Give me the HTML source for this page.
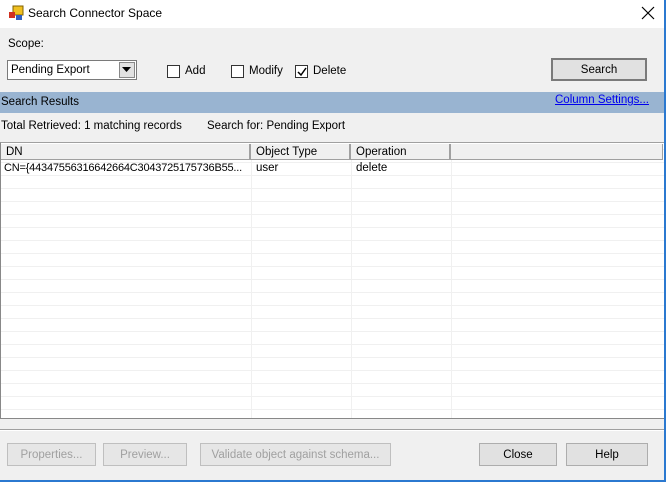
<!DOCTYPE html>
<html><head><style>
*{margin:0;padding:0;box-sizing:border-box}
body{width:666px;height:482px;background:#f0f0f0;font-family:"Liberation Sans",sans-serif;font-size:11.5px;color:#000;position:relative;overflow:hidden}
.a{position:absolute;white-space:nowrap}
.btn{position:absolute;border:1px solid #adadad;background:#e1e1e1;text-align:center;line-height:23px;height:23px}
.dis{color:#a0a0a0;border-color:#bfbfbf;background:#e6e6e6}
.cb{position:absolute;width:13px;height:13px;border:1px solid #333;background:#fff}
.hd{position:absolute;top:144px;height:16px;border-right:2px solid #a0a0a0;border-bottom:1px solid #a0a0a0;background:#f0f0f0;padding-left:5px;line-height:17px}
</style></head><body>
<div class="a" style="left:0;top:0;width:666px;height:28px;background:#fff"></div>
<svg class="a" style="left:8px;top:5px" width="16" height="16"><rect x="5" y="1" width="10" height="9" fill="#f0c020" stroke="#806000"/><rect x="1" y="7" width="6" height="6" fill="#d03020"/><rect x="8" y="10" width="6" height="5" fill="#3060c0"/></svg>
<div class="a" style="left:28px;top:6px;font-size:12px">Search Connector Space</div>
<svg class="a" style="left:641px;top:6px" width="14" height="14"><path d="M1 1L13 13M13 1L1 13" stroke="#000" stroke-width="1.2"/></svg>
<div class="a" style="left:664px;top:0;width:2px;height:482px;background:#2b79d0"></div>
<div class="a" style="left:0;top:480px;width:666px;height:2px;background:#2b79d0"></div>
<div class="a" style="left:8px;top:38px">Scope:</div>
<div class="a" style="left:7px;top:60px;width:130px;height:20px;border:1px solid #7a7a7a;background:#fff;padding-left:3px;line-height:19px">Pending Export</div>
<div class="a" style="left:119px;top:62px;width:16px;height:16px;background:#e1e1e1;border:1px solid #888"></div>
<svg class="a" style="left:122px;top:67px" width="10" height="6"><path d="M0 0H9L4.5 5Z" fill="#000"/></svg>
<div class="cb" style="left:167px;top:65px"></div><div class="a" style="left:185px;top:65px">Add</div>
<div class="cb" style="left:231px;top:65px"></div><div class="a" style="left:249px;top:65px">Modify</div>
<div class="cb" style="left:295px;top:65px"></div>
<svg class="a" style="left:297px;top:67px" width="10" height="10"><path d="M1 5L4 8L9 1" stroke="#000" stroke-width="1.5" fill="none"/></svg>
<div class="a" style="left:313px;top:65px">Delete</div>
<div class="btn" style="left:551px;top:58px;width:96px;border:2px solid #7a7a7a;line-height:20px">Search</div>
<div class="a" style="left:0;top:92px;width:664px;height:21px;background:#99b4d1"></div>
<div class="a" style="left:1px;top:96px">Search Results</div>
<div class="a" style="left:555px;top:94px;color:#0000ee;text-decoration:underline">Column Settings...</div>
<div class="a" style="left:1px;top:120px">Total Retrieved: 1 matching records</div>
<div class="a" style="left:207px;top:120px">Search for: Pending Export</div>
<div class="a" style="left:0;top:142px;width:664px;height:277px;background:#fff;border-top:1px solid #a0a0a0;border-left:1px solid #888;border-bottom:1px solid #888;
background-image:linear-gradient(#f0f0f0 1px,transparent 1px);background-size:100% 13px;background-position:0 32px"></div>
<div class="a" style="left:251px;top:160px;width:1px;height:258px;background:#f0f0f0"></div>
<div class="a" style="left:351px;top:160px;width:1px;height:258px;background:#f0f0f0"></div>
<div class="a" style="left:451px;top:160px;width:1px;height:258px;background:#f0f0f0"></div>
<div class="hd" style="left:1px;width:250px">DN</div>
<div class="hd" style="left:251px;width:100px">Object Type</div>
<div class="hd" style="left:351px;width:100px">Operation</div>
<div class="hd" style="left:451px;width:212px;border-right:1px solid #a0a0a0"></div>
<div class="a" style="left:4px;top:162px;width:244px;overflow:hidden;font-size:11px;letter-spacing:-0.2px">CN={44347556316642664C3043725175736B55...</div>
<div class="a" style="left:256px;top:162px">user</div>
<div class="a" style="left:356px;top:162px">delete</div>
<div class="a" style="left:0;top:429px;width:664px;height:1px;background:#a0a0a0"></div>
<div class="a" style="left:0;top:430px;width:664px;height:1px;background:#fff"></div>
<div class="btn dis" style="left:7px;top:443px;width:89px">Properties...</div>
<div class="btn dis" style="left:103px;top:443px;width:84px">Preview...</div>
<div class="btn dis" style="left:200px;top:443px;width:191px">Validate object against schema...</div>
<div class="btn" style="left:479px;top:443px;width:78px">Close</div>
<div class="btn" style="left:566px;top:443px;width:82px">Help</div>
</body></html>
